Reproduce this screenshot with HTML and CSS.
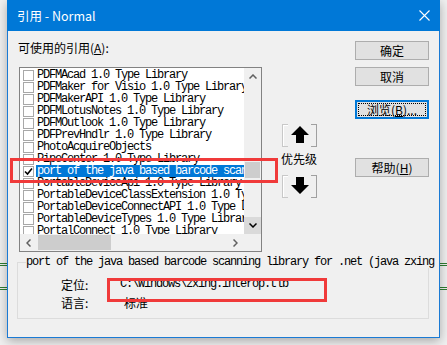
FILE: index.html
```html
<!DOCTYPE html>
<html lang="zh-CN">
<head>
  <meta charset="UTF-8" />
  <title>引用 - Normal</title>
  <link rel="stylesheet" href="styles.css">
</head>
<body>

  <div class="window">
    <!-- Title bar -->
    <div class="titlebar">
      <span class="title">引用 - Normal</span>
      <svg class="close" width="11" height="11" viewBox="0 0 11 11">
        <path d="M0.5 0.5 L10.5 10.5 M10.5 0.5 L0.5 10.5" stroke="#fff" stroke-width="1.1" fill="none"/>
      </svg>
    </div>

    <div class="content">
      <div class="top">
        <!-- Available references -->
        <div class="left">
          <div class="label">可使用的引用(<u>A</u>):</div>
          <div class="listbox">
            <div class="rows">
              <div class="row"><span class="check"></span><span class="row-text">PDFMAcad 1.0 Type Library</span></div>
              <div class="row"><span class="check"></span><span class="row-text">PDFMaker for Visio 1.0 Type Library</span></div>
              <div class="row"><span class="check"></span><span class="row-text">PDFMakerAPI 1.0 Type Library</span></div>
              <div class="row"><span class="check"></span><span class="row-text">PDFMLotusNotes 1.0 Type Library</span></div>
              <div class="row"><span class="check"></span><span class="row-text">PDFMOutlook 1.0 Type Library</span></div>
              <div class="row"><span class="check"></span><span class="row-text">PDFPrevHndlr 1.0 Type Library</span></div>
              <div class="row"><span class="check"></span><span class="row-text">PhotoAcquireObjects</span></div>
              <div class="row"><span class="check"></span><span class="row-text">PipeCenter 1.0 Type Library</span></div>
              <div class="row selected">
                <span class="check">
                  <svg width="9" height="9" viewBox="0 0 9 9"><path d="M1 4.5 L3.5 7 L8 1.5" stroke="#000" stroke-width="1.6" fill="none"/></svg>
                </span>
                <span class="row-text">port of the java based barcode scanning library for .net (java zxing</span>
              </div>
              <div class="row"><span class="check"></span><span class="row-text">PortableDeviceApi 1.0 Type Library</span></div>
              <div class="row"><span class="check"></span><span class="row-text">PortableDeviceClassExtension 1.0 Type Library</span></div>
              <div class="row"><span class="check"></span><span class="row-text">PortableDeviceConnectAPI 1.0 Type Library</span></div>
              <div class="row"><span class="check"></span><span class="row-text">PortableDeviceTypes 1.0 Type Library</span></div>
              <div class="row"><span class="check"></span><span class="row-text">PortalConnect 1.0 Type Library</span></div>
            </div>

            <div class="vscroll">
              <div class="sb-btn">
                <svg width="8" height="5" viewBox="0 0 8 5"><path d="M0.5 4.5 L4 1 L7.5 4.5" stroke="#606060" stroke-width="1.5" fill="none"/></svg>
              </div>
              <div class="v-track"><div class="v-thumb"></div></div>
              <div class="sb-btn hover">
                <svg width="8" height="5" viewBox="0 0 8 5"><path d="M0.5 0.5 L4 4 L7.5 0.5" stroke="#000" stroke-width="1.5" fill="none"/></svg>
              </div>
            </div>

            <div class="hscroll">
              <div class="sb-btn">
                <svg width="5" height="8" viewBox="0 0 5 8"><path d="M4.5 0.5 L1 4 L4.5 7.5" stroke="#606060" stroke-width="1.5" fill="none"/></svg>
              </div>
              <div class="h-track"><div class="h-thumb"></div></div>
              <div class="sb-btn">
                <svg width="5" height="8" viewBox="0 0 5 8"><path d="M0.5 0.5 L4 4 L0.5 7.5" stroke="#606060" stroke-width="1.5" fill="none"/></svg>
              </div>
            </div>
            <div class="corner"></div>
          </div>
        </div>

        <!-- Priority -->
        <div class="priority">
          <div class="arrow-btn">
            <svg width="18" height="17" viewBox="0 0 18 17"><polygon points="9,0 18,9 13,9 13,17 5,17 5,9 0,9" fill="#000"/></svg>
          </div>
          <div class="priority-label">优先级</div>
          <div class="arrow-btn">
            <svg width="18" height="17" viewBox="0 0 18 17"><polygon points="5,0 13,0 13,8 18,8 9,17 0,8 5,8" fill="#000"/></svg>
          </div>
        </div>

        <!-- Buttons -->
        <div class="buttons">
          <div class="btn">确定</div>
          <div class="btn btn-cancel">取消</div>
          <div class="btn btn-focus">浏览(<u>B</u>)...</div>
          <div class="btn btn-help">帮助(<u>H</u>)</div>
        </div>
      </div>

      <!-- Selected reference info -->
      <div class="group">
        <div class="group-title">port of the java based barcode scanning library for .net (java zxing</div>
        <div class="info-row">
          <span class="key">定位:</span>
          <span class="mono">C:\Windows\zxing.interop.tlb</span>
        </div>
        <div class="info-row">
          <span class="key">语言:</span>
          <span class="lang">标准</span>
        </div>
      </div>
    </div>

    <!-- annotation boxes -->
    <div class="mark mark-list"></div>
    <div class="mark mark-path"></div>
  </div>

</body>
</html>
```

FILE: styles.css
```css
* {
  box-sizing: border-box;
}
body {
  margin: 0;
  height: 345px;
  overflow: hidden;
  font-family: "Noto Sans CJK SC", "Microsoft YaHei", sans-serif;
  font-size: 12px;
  color: #000;
  background:
    linear-gradient(#2f7d32, #2f7d32) 0 263px / 100% 1px no-repeat,
    linear-gradient(#2f7d32, #2f7d32) 0 265px / 100% 1px no-repeat,
    linear-gradient(#2f7d32, #2f7d32) 0 287px / 100% 1px no-repeat,
    linear-gradient(#2f7d32, #2f7d32) 0 289px / 100% 1px no-repeat,
    #f0f0f0;
}
.window {
  position: relative;
  margin-left: 7px;
  width: 433px;
  height: 338px;
  border: 1px solid #1a7ad4;
  border-top: none;
  background: #f0f0f0;
  box-shadow: 0 3px 10px rgba(0,0,0,0.3);
}
.titlebar {
  height: 31px;
  margin: 0 -1px;
  background: #0078d7;
  color: #fff;
  display: flex;
  align-items: center;
  justify-content: space-between;
  padding: 0 10px 0 10px;
}
.title {
  font-size: 12.5px;
  line-height: 14px;
}
.content {
  padding: 10px 0 0 11px;
}
.top {
  display: flex;
}
.left {
  width: 243px;
}
.label {
  height: 14px;
  line-height: 14px;
  margin: 0 0 12px -1px;
}
.listbox {
  width: 243px;
  height: 185px;
  border: 1px solid #828282;
  background: #fff;
  display: grid;
  grid-template-columns: 224px 17px;
  grid-template-rows: 166px 17px;
}
.rows {
  padding-top: 1px;
  overflow: hidden;
}
.row {
  height: 12px;
  display: flex;
  align-items: center;
  white-space: nowrap;
}
.check {
  flex: none;
  width: 11px;
  height: 11px;
  margin: 0 2px 0 3px;
  border: 1px solid #a8a8a8;
  background: #fff;
  display: flex;
  align-items: center;
  justify-content: center;
}
.row-text, .mono, .group-title {
  font-family: "Liberation Mono", "DejaVu Sans Mono", monospace;
  font-size: 12px;
  letter-spacing: -1.2px;
}
.row-text {
  line-height: 12px;
  padding-left: 1px;
}
.row.selected .row-text {
  background: #0078d7;
  color: #fff;
}
.vscroll {
  background: #f0f0f0;
  display: flex;
  flex-direction: column;
}
.hscroll {
  background: #f0f0f0;
  display: flex;
}
.corner {
  background: #f0f0f0;
}
.sb-btn {
  flex: none;
  width: 17px;
  height: 17px;
  display: flex;
  align-items: center;
  justify-content: center;
}
.sb-btn.hover {
  background: #dadada;
}
.v-track, .h-track {
  flex: 1;
}
.v-thumb {
  margin: 77px 1px 0 1px;
  height: 16px;
  background: #cdcdcd;
}
.h-thumb {
  margin: 1px 0 0 1px;
  width: 73px;
  height: 15px;
  background: #cdcdcd;
}
.priority {
  margin-left: 19px;
  width: 36px;
  padding-top: 83px;
}
.arrow-btn {
  position: relative;
  width: 35px;
  height: 21px;
  margin-left: 1px;
  display: flex;
  align-items: center;
  justify-content: center;
}
.arrow-btn::before, .arrow-btn::after {
  content: "";
  position: absolute;
  top: 0;
  width: 5px;
  height: 21px;
  border: 1px solid #c8c8c8;
}
.arrow-btn::before {
  left: 0;
  border-right: none;
  box-shadow: inset 1px 1px 0 #fff;
}
.arrow-btn::after {
  right: 0;
  border-left: none;
  border-color: #a0a0a0;
}
.priority-label {
  margin: 7px 0 9px;
  line-height: 14px;
  white-space: nowrap;
}
.buttons {
  margin-left: 38px;
  width: 74px;
}
.btn {
  position: relative;
  height: 19px;
  border: 1px solid #adadad;
  background: #e1e1e1;
  display: flex;
  align-items: center;
  justify-content: center;
  line-height: 14px;
}
.btn-cancel {
  margin-top: 7px;
}
.btn-focus {
  margin-top: 14px;
  border-color: #0078d7;
  box-shadow: inset 0 0 0 1px #0078d7;
}
.btn-focus::after {
  content: "";
  position: absolute;
  left: 2px;
  right: 2px;
  top: 2px;
  bottom: 2px;
  border: 1px dotted #000;
}
.btn-help {
  margin-top: 39px;
}
.group {
  margin: 10px 0 0 -2px;
  width: 412px;
  height: 57px;
  border: 1px solid #dcdcdc;
  padding-left: 8px;
}
.group-title {
  width: max-content;
  margin-top: -7px;
  line-height: 12px;
  white-space: nowrap;
  background: #f0f0f0;
}
.group-title + .info-row {
  margin-top: 7px;
}
.info-row {
  display: flex;
  align-items: center;
  height: 18px;
  padding-left: 35px;
  white-space: nowrap;
}
.key {
  width: 59px;
}
.lang {
  padding-left: 4px;
}
.mark {
  position: absolute;
  border: 3px solid #f03a3a;
}
.mark-list {
  left: 2px;
  top: 158px;
  width: 268px;
  height: 25px;
}
.mark-path {
  left: 99px;
  top: 278px;
  width: 220px;
  height: 24px;
}
```
